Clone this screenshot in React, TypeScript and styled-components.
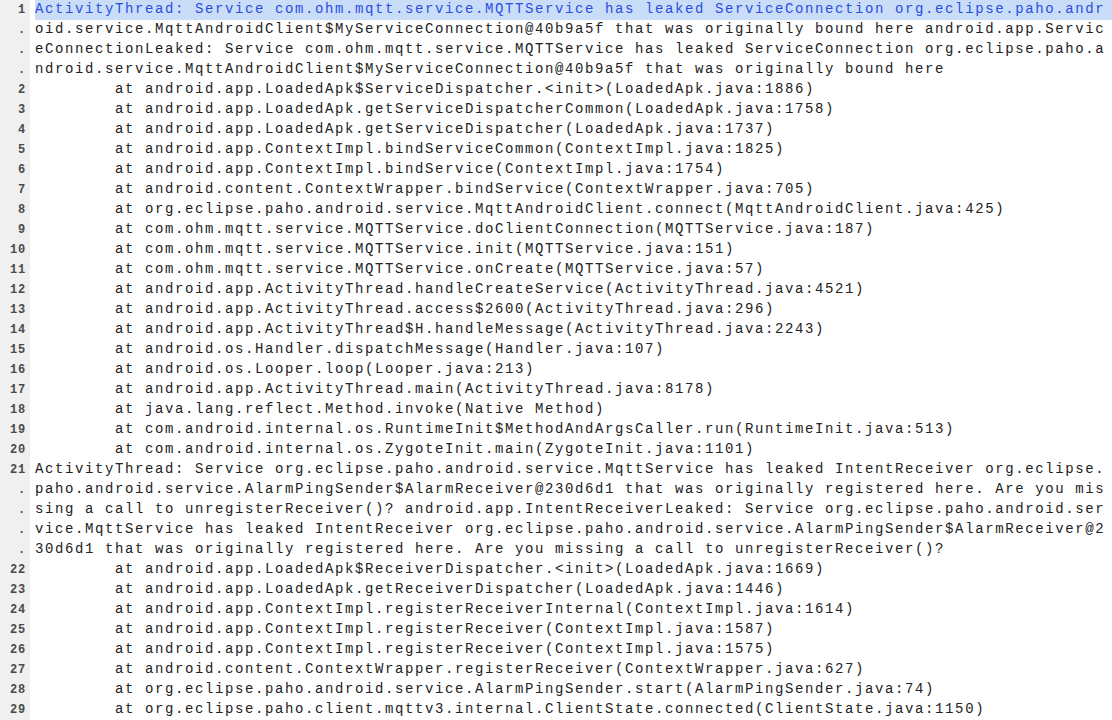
import React from "react";
import styled, { createGlobalStyle } from "styled-components";

const GlobalStyle = createGlobalStyle`
  html, body { margin: 0; padding: 0; background: #ffffff; }
  body { overflow: hidden; }
`;

type LogLine = { rows: string[] };

const T = "        at ";

const lines: LogLine[] = [
  {
    rows: [
      "ActivityThread: Service com.ohm.mqtt.service.MQTTService has leaked ServiceConnection org.eclipse.paho.andr",
      "oid.service.MqttAndroidClient$MyServiceConnection@40b9a5f that was originally bound here android.app.Servic",
      "eConnectionLeaked: Service com.ohm.mqtt.service.MQTTService has leaked ServiceConnection org.eclipse.paho.a",
      "ndroid.service.MqttAndroidClient$MyServiceConnection@40b9a5f that was originally bound here",
    ],
  },
  ...[
    "android.app.LoadedApk$ServiceDispatcher.<init>(LoadedApk.java:1886)",
    "android.app.LoadedApk.getServiceDispatcherCommon(LoadedApk.java:1758)",
    "android.app.LoadedApk.getServiceDispatcher(LoadedApk.java:1737)",
    "android.app.ContextImpl.bindServiceCommon(ContextImpl.java:1825)",
    "android.app.ContextImpl.bindService(ContextImpl.java:1754)",
    "android.content.ContextWrapper.bindService(ContextWrapper.java:705)",
    "org.eclipse.paho.android.service.MqttAndroidClient.connect(MqttAndroidClient.java:425)",
    "com.ohm.mqtt.service.MQTTService.doClientConnection(MQTTService.java:187)",
    "com.ohm.mqtt.service.MQTTService.init(MQTTService.java:151)",
    "com.ohm.mqtt.service.MQTTService.onCreate(MQTTService.java:57)",
    "android.app.ActivityThread.handleCreateService(ActivityThread.java:4521)",
    "android.app.ActivityThread.access$2600(ActivityThread.java:296)",
    "android.app.ActivityThread$H.handleMessage(ActivityThread.java:2243)",
    "android.os.Handler.dispatchMessage(Handler.java:107)",
    "android.os.Looper.loop(Looper.java:213)",
    "android.app.ActivityThread.main(ActivityThread.java:8178)",
    "java.lang.reflect.Method.invoke(Native Method)",
    "com.android.internal.os.RuntimeInit$MethodAndArgsCaller.run(RuntimeInit.java:513)",
    "com.android.internal.os.ZygoteInit.main(ZygoteInit.java:1101)",
  ].map((s) => ({ rows: [T + s] })),
  {
    rows: [
      "ActivityThread: Service org.eclipse.paho.android.service.MqttService has leaked IntentReceiver org.eclipse.",
      "paho.android.service.AlarmPingSender$AlarmReceiver@230d6d1 that was originally registered here. Are you mis",
      "sing a call to unregisterReceiver()? android.app.IntentReceiverLeaked: Service org.eclipse.paho.android.ser",
      "vice.MqttService has leaked IntentReceiver org.eclipse.paho.android.service.AlarmPingSender$AlarmReceiver@2",
      "30d6d1 that was originally registered here. Are you missing a call to unregisterReceiver()?",
    ],
  },
  ...[
    "android.app.LoadedApk$ReceiverDispatcher.<init>(LoadedApk.java:1669)",
    "android.app.LoadedApk.getReceiverDispatcher(LoadedApk.java:1446)",
    "android.app.ContextImpl.registerReceiverInternal(ContextImpl.java:1614)",
    "android.app.ContextImpl.registerReceiver(ContextImpl.java:1587)",
    "android.app.ContextImpl.registerReceiver(ContextImpl.java:1575)",
    "android.content.ContextWrapper.registerReceiver(ContextWrapper.java:627)",
    "org.eclipse.paho.android.service.AlarmPingSender.start(AlarmPingSender.java:74)",
    "org.eclipse.paho.client.mqttv3.internal.ClientState.connected(ClientState.java:1150)",
  ].map((s) => ({ rows: [T + s] })),
];

const Editor = styled.div`
  width: 1112px;
  height: 720px;
  overflow: hidden;
  display: grid;
  grid-template-columns: 30px 1fr;
  background: #ffffff;
`;

const Gutter = styled.div`
  background: #f0f0f0;
  display: flex;
  flex-direction: column;
`;

const LineNo = styled.div`
  height: 20px;
  line-height: 21px;
  padding-right: 4px;
  text-align: right;
  font-family: "Liberation Mono", "Courier New", monospace;
  font-size: 12px;
  letter-spacing: 0.8px;
  font-weight: bold;
  color: #4a4a4a;
  white-space: pre;
`;

const Content = styled.div`
  display: flex;
  flex-direction: column;
  padding-left: 5px;
`;

const Row = styled.div<{ $active?: boolean }>`
  height: 20px;
  line-height: 19px;
  font-family: "Liberation Mono", "Courier New", monospace;
  font-size: 14px;
  letter-spacing: 1.6px;
  white-space: pre;
  background: ${(p) => (p.$active ? "#c9ddf8" : "transparent")};
  color: ${(p) => (p.$active ? "#2b4ee0" : "#222222")};
`;

export default function App() {
  return (
    <>
      <GlobalStyle />
      <Editor>
        <Gutter>
          {lines.map((l, i) =>
            l.rows.map((_, j) => (
              <LineNo key={`${i}-${j}`}>{j === 0 ? String(i + 1) : "."}</LineNo>
            ))
          )}
        </Gutter>
        <Content>
          {lines.map((l, i) =>
            l.rows.map((r, j) => (
              <Row key={`${i}-${j}`} $active={i === 0 && j === 0}>
                {r}
              </Row>
            ))
          )}
        </Content>
      </Editor>
    </>
  );
}
